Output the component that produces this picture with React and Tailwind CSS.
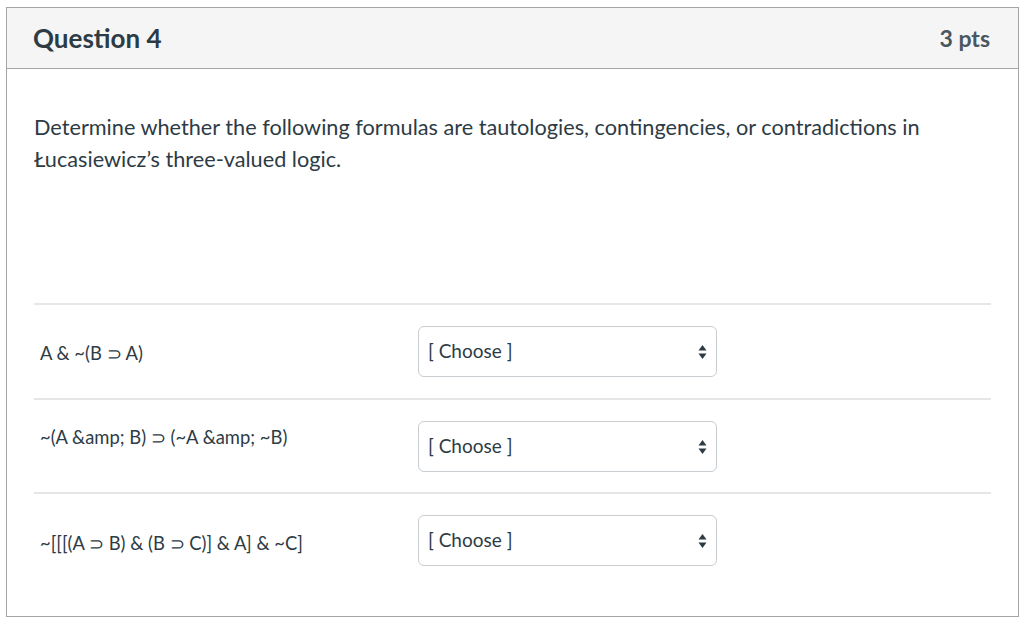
import React from 'react';

const rows = [
  { formula: 'A & ~(B ⊃ A)', labelPad: 'pt-[37px]', height: 'h-[95px]' },
  { formula: '~(A &amp; B) ⊃ (~A &amp; ~B)', labelPad: 'pt-[26px]', height: 'h-[94px]' },
  { formula: '~[[[(A ⊃ B) & (B ⊃ C)] & A] & ~C]', labelPad: 'pt-[38px]', height: 'h-[121px]' },
];

function ChooseSelect() {
  return (
    <div className="w-[299px] h-[51px] border border-[#c7cdd1] rounded-[6px] bg-white flex items-center justify-between pl-[9px] pr-[9px]">
      <span className="text-[19px] text-[#2d3b45]">[ Choose ]</span>
      <svg width="9" height="16" viewBox="0 0 9 16" className="text-[#2d3b45]">
        <path d="M4.5 1 L8.5 6.5 L0.5 6.5 Z" fill="currentColor" />
        <path d="M4.5 15 L8.5 9.5 L0.5 9.5 Z" fill="currentColor" />
      </svg>
    </div>
  );
}

export default function App() {
  return (
    <div className="min-h-screen bg-white pl-[6px] pt-[7px] pr-[5px]" style={{ fontFamily: 'Lato, "Noto Sans", sans-serif' }}>
      <div className="border border-[#a5a5a5] bg-white h-[610px]">
        {/* Header */}
        <div className="h-[61px] bg-[#f5f5f5] border-b border-[#a5a5a5] flex items-center justify-between pl-[26px] pr-[28px]">
          <h2 className="text-[26px] font-bold text-[#2d3b45] leading-none">Question 4</h2>
          <span className="text-[23px] font-bold text-[#4a5660] leading-none">3 pts</span>
        </div>

        {/* Body */}
        <div className="px-[27px] pt-[42px]">
          <p className="text-[21.7px] leading-[32px] text-[#2d3b45]">
            Determine whether the following formulas are tautologies, contingencies, or contradictions in Łucasiewicz’s three-valued logic.
          </p>

          <div className="mt-[128px]">
            {rows.map((r, i) => (
              <div key={i} className={`border-t-2 border-[#e6e6e6] flex ${r.height}`}>
                <div className={`w-[384px] pl-[6px] text-[18.4px] text-[#2d3b45] leading-[22px] ${r.labelPad}`}>{r.formula}</div>
                <div className="pt-[21px]">
                  <ChooseSelect />
                </div>
              </div>
            ))}
          </div>
        </div>
      </div>
    </div>
  );
}
